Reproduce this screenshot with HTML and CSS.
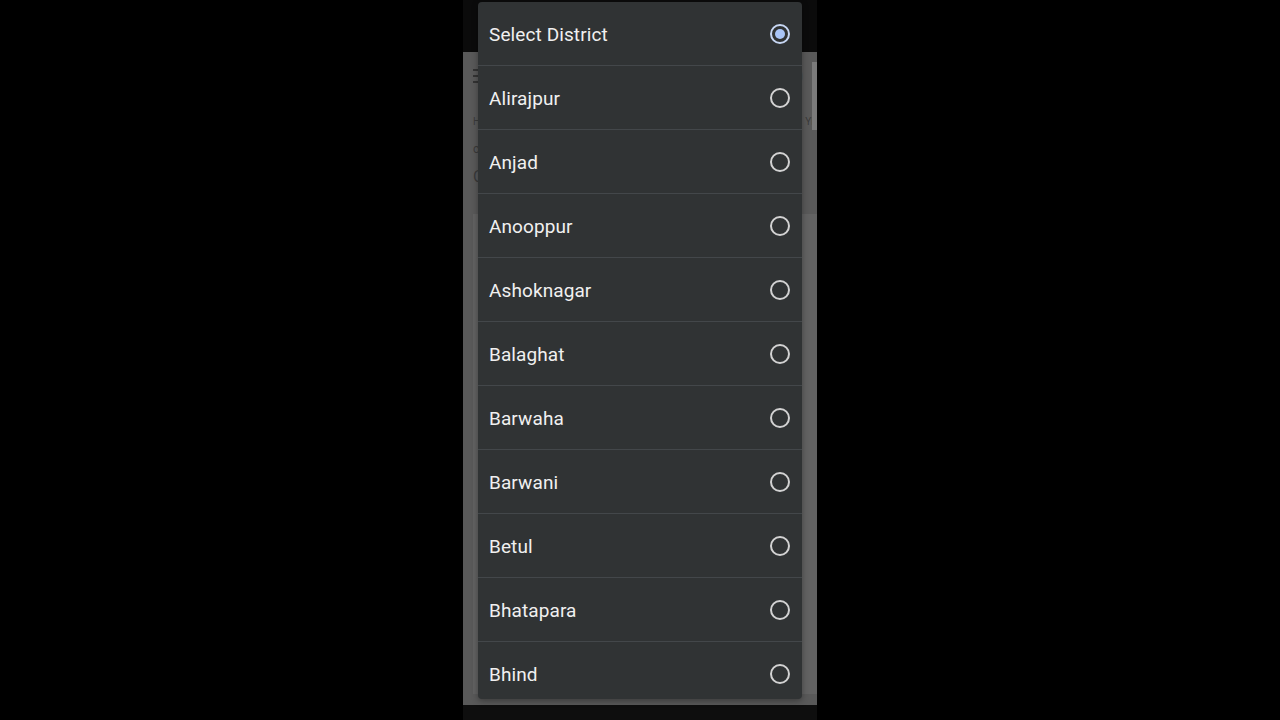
FILE: index.html
```html
<!DOCTYPE html>
<html>
<head>
<meta charset="utf-8">
<link rel="stylesheet" href="styles.css">
</head>
<body>
<div class="phone">
  <div class="status"></div>
  <div class="app">
    <div class="toolbar">
      <div class="ham"><span></span><span></span><span></span></div>
      <div class="tb-right">0</div>
    </div>
    <div class="tabs"><span>H</span><span>YE</span></div>
    <div class="line small">c</div>
    <div class="line big">C</div>
    <div class="card"></div>
    <div class="thumb"></div>
  </div>
  <div class="nav"></div>

  <div class="dialog">
    <div class="row"><span class="label">Select District</span><span class="radio on"></span></div>
    <div class="row"><span class="label">Alirajpur</span><span class="radio"></span></div>
    <div class="row"><span class="label">Anjad</span><span class="radio"></span></div>
    <div class="row"><span class="label">Anooppur</span><span class="radio"></span></div>
    <div class="row"><span class="label">Ashoknagar</span><span class="radio"></span></div>
    <div class="row"><span class="label">Balaghat</span><span class="radio"></span></div>
    <div class="row"><span class="label">Barwaha</span><span class="radio"></span></div>
    <div class="row"><span class="label">Barwani</span><span class="radio"></span></div>
    <div class="row"><span class="label">Betul</span><span class="radio"></span></div>
    <div class="row"><span class="label">Bhatapara</span><span class="radio"></span></div>
    <div class="row"><span class="label">Bhind</span><span class="radio"></span></div>
  </div>
</div>
</body>
</html>
```

FILE: styles.css
```css
html, body {
  margin: 0;
  padding: 0;
  background: #000;
  height: 720px;
  overflow: hidden;
}
body {
  display: flex;
  justify-content: center;
  font-family: Roboto, "Noto Sans", sans-serif;
}
.phone {
  position: relative;
  width: 354px;
  height: 720px;
  display: flex;
  flex-direction: column;
}
.status {
  height: 52px;
  background: #0b0b0b;
}
.app {
  flex: 1;
  position: relative;
  background: #595959;
  padding: 0 0 0 10px;
  color: #3a3a3a;
  overflow: hidden;
}
.nav {
  height: 15px;
  background: #0e0e0e;
}
.toolbar {
  height: 48px;
  display: flex;
  align-items: center;
  justify-content: space-between;
  padding-right: 14px;
}
.ham {
  display: flex;
  flex-direction: column;
  gap: 4px;
}
.ham span {
  width: 14px;
  height: 2px;
  background: #333;
}
.tb-right {
  font-size: 18px;
  color: #444;
}
.tabs {
  display: flex;
  justify-content: space-between;
  font-size: 10px;
  padding: 16px 0 0 0;
  height: 20px;
}
.line.small {
  font-size: 12px;
  height: 26px;
  line-height: 26px;
}
.line.big {
  font-size: 16px;
  height: 30px;
  line-height: 30px;
}
.card {
  margin-top: 22px;
  height: 480px;
  background: #626262;
}
.thumb {
  position: absolute;
  right: 0;
  top: 10px;
  width: 5px;
  height: 68px;
  background: #7a7a7a;
}
.dialog {
  position: absolute;
  top: 2px;
  left: 15px;
  width: 324px;
  height: 697px;
  background: #303334;
  border-radius: 4px;
  overflow: hidden;
  box-shadow: 0 2px 6px rgba(0,0,0,0.35);
}
.row {
  box-sizing: border-box;
  height: 64px;
  display: flex;
  align-items: center;
  justify-content: space-between;
  padding: 1px 12px 0 11px;
  border-bottom: 1px solid #43474a;
}
.label {
  font-size: 19px;
  color: #f0f0f0;
  letter-spacing: 0.1px;
}
.radio {
  box-sizing: border-box;
  width: 20px;
  height: 20px;
  border-radius: 50%;
  border: 2px solid #d2d2d2;
  display: flex;
  align-items: center;
  justify-content: center;
}
.radio.on {
  border-color: #c6d6f2;
}
.radio.on::after {
  content: "";
  width: 10px;
  height: 10px;
  border-radius: 50%;
  background: #a9c5f7;
}
```
